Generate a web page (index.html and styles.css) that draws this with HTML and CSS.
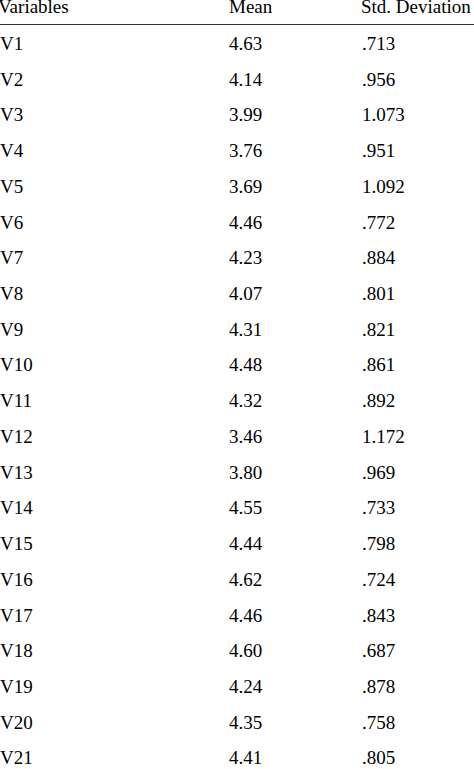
FILE: index.html
```html
<!DOCTYPE html>
<html>
<head>
<meta charset="utf-8">
<link rel="stylesheet" href="styles.css">
</head>
<body>
<div class="stats">
  <div class="head">
    <div class="c1 h1">Variables</div>
    <div class="c2">Mean</div>
    <div class="c3 h3">Std. Deviation</div>
  </div>
  <div class="rows">
    <div class="row"><div class="c1">V1</div><div class="c2">4.63</div><div class="c3">.713</div></div>
    <div class="row"><div class="c1">V2</div><div class="c2">4.14</div><div class="c3">.956</div></div>
    <div class="row"><div class="c1">V3</div><div class="c2">3.99</div><div class="c3">1.073</div></div>
    <div class="row"><div class="c1">V4</div><div class="c2">3.76</div><div class="c3">.951</div></div>
    <div class="row"><div class="c1">V5</div><div class="c2">3.69</div><div class="c3">1.092</div></div>
    <div class="row"><div class="c1">V6</div><div class="c2">4.46</div><div class="c3">.772</div></div>
    <div class="row"><div class="c1">V7</div><div class="c2">4.23</div><div class="c3">.884</div></div>
    <div class="row"><div class="c1">V8</div><div class="c2">4.07</div><div class="c3">.801</div></div>
    <div class="row"><div class="c1">V9</div><div class="c2">4.31</div><div class="c3">.821</div></div>
    <div class="row"><div class="c1">V10</div><div class="c2">4.48</div><div class="c3">.861</div></div>
    <div class="row"><div class="c1">V11</div><div class="c2">4.32</div><div class="c3">.892</div></div>
    <div class="row"><div class="c1">V12</div><div class="c2">3.46</div><div class="c3">1.172</div></div>
    <div class="row"><div class="c1">V13</div><div class="c2">3.80</div><div class="c3">.969</div></div>
    <div class="row"><div class="c1">V14</div><div class="c2">4.55</div><div class="c3">.733</div></div>
    <div class="row"><div class="c1">V15</div><div class="c2">4.44</div><div class="c3">.798</div></div>
    <div class="row"><div class="c1">V16</div><div class="c2">4.62</div><div class="c3">.724</div></div>
    <div class="row"><div class="c1">V17</div><div class="c2">4.46</div><div class="c3">.843</div></div>
    <div class="row"><div class="c1">V18</div><div class="c2">4.60</div><div class="c3">.687</div></div>
    <div class="row"><div class="c1">V19</div><div class="c2">4.24</div><div class="c3">.878</div></div>
    <div class="row"><div class="c1">V20</div><div class="c2">4.35</div><div class="c3">.758</div></div>
    <div class="row"><div class="c1">V21</div><div class="c2">4.41</div><div class="c3">.805</div></div>
  </div>
</div>
</body>
</html>
```
FILE: styles.css
```css
html, body {
  margin: 0;
  padding: 0;
  background: #fff;
}
body {
  width: 474px;
  height: 769px;
  overflow: hidden;
  font-family: "Liberation Serif", "Times New Roman", serif;
  font-size: 19px;
  color: #000;
}
.stats {
  width: 474px;
}
.head, .row {
  display: grid;
  grid-template-columns: 229px 133px 1fr;
  white-space: nowrap;
}
.head {
  line-height: 13px;
  height: 13px;
  padding-bottom: 11px;
  border-bottom: 1px solid #333;
}
.h1 {
  margin-left: -2px;
}
.h3 {
  margin-left: -1px;
}
.rows {
  padding-top: 1px;
}
.row {
  height: 35.72px;
  line-height: 35.72px;
}
```
